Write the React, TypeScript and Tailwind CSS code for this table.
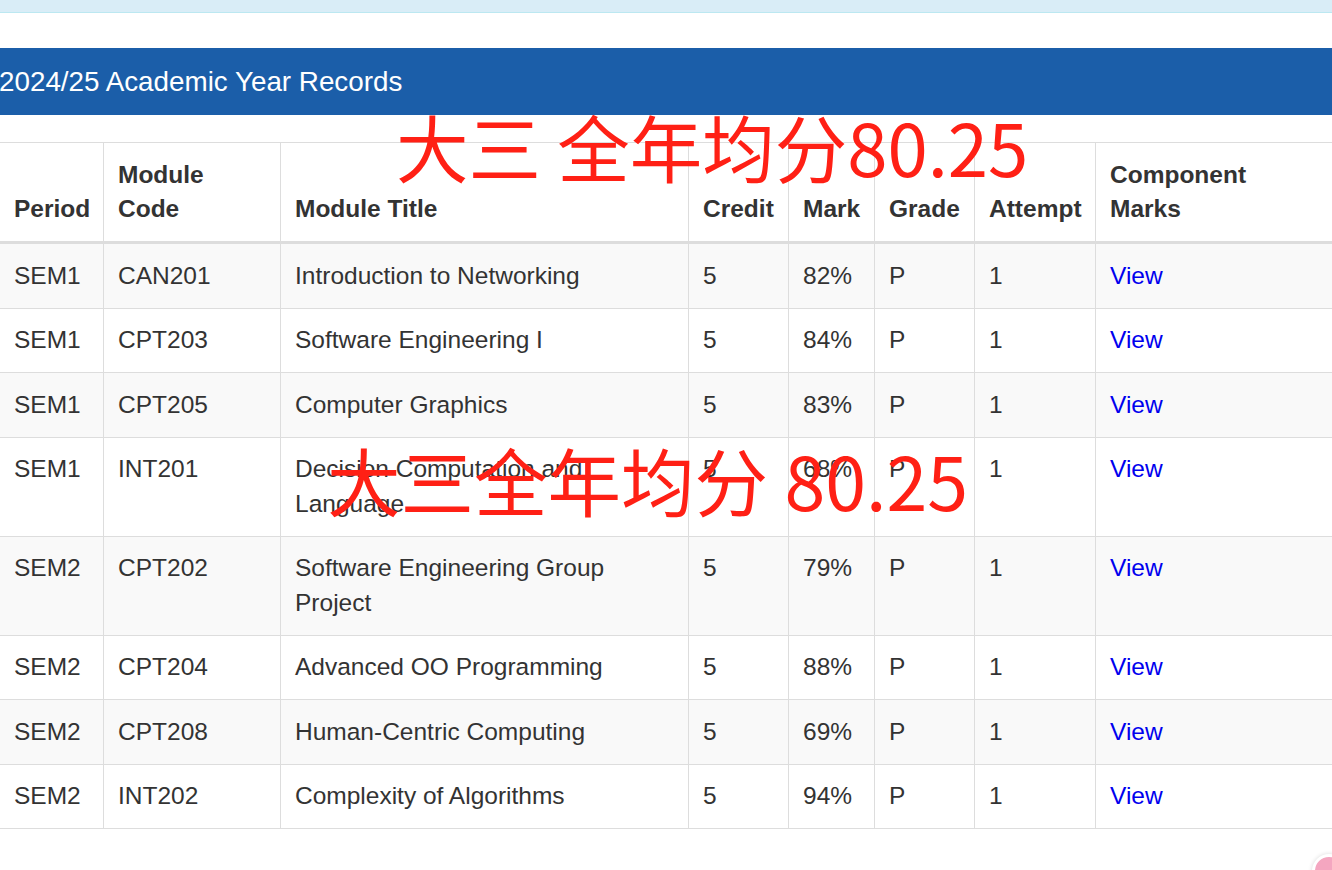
import React from "react";

type Row = {
  period: string;
  code: string;
  title: React.ReactNode;
  credit: string;
  mark: string;
  grade: string;
  attempt: string;
};

const rows: Row[] = [
  { period: "SEM1", code: "CAN201", title: "Introduction to Networking", credit: "5", mark: "82%", grade: "P", attempt: "1" },
  { period: "SEM1", code: "CPT203", title: "Software Engineering I", credit: "5", mark: "84%", grade: "P", attempt: "1" },
  { period: "SEM1", code: "CPT205", title: "Computer Graphics", credit: "5", mark: "83%", grade: "P", attempt: "1" },
  {
    period: "SEM1",
    code: "INT201",
    title: (
      <>
        Decision Computation and
        <br />
        Language
      </>
    ),
    credit: "5",
    mark: "68%",
    grade: "P",
    attempt: "1",
  },
  {
    period: "SEM2",
    code: "CPT202",
    title: (
      <>
        Software Engineering Group
        <br />
        Project
      </>
    ),
    credit: "5",
    mark: "79%",
    grade: "P",
    attempt: "1",
  },
  { period: "SEM2", code: "CPT204", title: "Advanced OO Programming", credit: "5", mark: "88%", grade: "P", attempt: "1" },
  { period: "SEM2", code: "CPT208", title: "Human-Centric Computing", credit: "5", mark: "69%", grade: "P", attempt: "1" },
  { period: "SEM2", code: "INT202", title: "Complexity of Algorithms", credit: "5", mark: "94%", grade: "P", attempt: "1" },
];

const th = "border border-[#ddd] border-b-[3px] px-[14px] py-[14.5px] text-left align-bottom font-bold";
const td = "border border-[#ddd] px-[14px] py-[14.5px] align-top";

function RecordsTable() {
  return (
    <table className="-ml-px w-[1333px] table-fixed border-collapse text-[24.5px] leading-[34.5px] text-[#333]">
      <colgroup>
        <col className="w-[104px]" />
        <col className="w-[177px]" />
        <col className="w-[408px]" />
        <col className="w-[100px]" />
        <col className="w-[86px]" />
        <col className="w-[100px]" />
        <col className="w-[121px]" />
        <col className="w-[237px]" />
      </colgroup>
      <thead>
        <tr>
          <th className={th}>Period</th>
          <th className={th}>
            Module
            <br />
            Code
          </th>
          <th className={th}>Module Title</th>
          <th className={th}>Credit</th>
          <th className={th}>Mark</th>
          <th className={th}>Grade</th>
          <th className={th}>Attempt</th>
          <th className={th}>
            Component
            <br />
            Marks
          </th>
        </tr>
      </thead>
      <tbody>
        {rows.map((r, i) => (
          <tr key={r.code} className={i % 2 === 0 ? "bg-[#f9f9f9]" : "bg-white"}>
            <td className={td}>{r.period}</td>
            <td className={td}>{r.code}</td>
            <td className={td}>{r.title}</td>
            <td className={td}>{r.credit}</td>
            <td className={td}>{r.mark}</td>
            <td className={td}>{r.grade}</td>
            <td className={td}>{r.attempt}</td>
            <td className={td}>
              <a className="text-[#0000ee]">View</a>
            </td>
          </tr>
        ))}
      </tbody>
    </table>
  );
}

export default function App() {
  return (
    <div
      className="relative h-[870px] w-[1332px] overflow-hidden bg-white"
      style={{ fontFamily: '"Liberation Sans", Arial, sans-serif' }}
    >
      <div className="h-[13px] border-b border-[#bce8f1] bg-[#d9edf7]" />
      <div className="h-[35px]" />
      <div className="flex h-[67px] items-center bg-[#1b5ea9] text-[27.8px] text-white">
        <span className="-ml-px">2024/25 Academic Year Records</span>
      </div>
      <div className="pt-[27px]">
        <RecordsTable />
      </div>

      {/* red annotations drawn over the screenshot */}
      <div className="absolute left-[396px] top-[110px] whitespace-pre text-[72.5px] leading-[72px] text-[#ff2015] [font-family:'Noto_Sans_CJK_SC',sans-serif]">
        大三 全年均分80.25
      </div>
      <div className="absolute left-[327px] top-[442px] whitespace-pre text-[73.5px] leading-[74px] text-[#ff2015] [font-family:'Noto_Sans_CJK_SC',sans-serif]">
        大三全年均分 80.25
      </div>

      <div className="absolute -bottom-[18px] -right-[14px] h-[34px] w-[34px] rounded-full border-[3px] border-white bg-[#f4a6c0] shadow-[0_0_4px_rgba(0,0,0,0.15)]" />
    </div>
  );
}
